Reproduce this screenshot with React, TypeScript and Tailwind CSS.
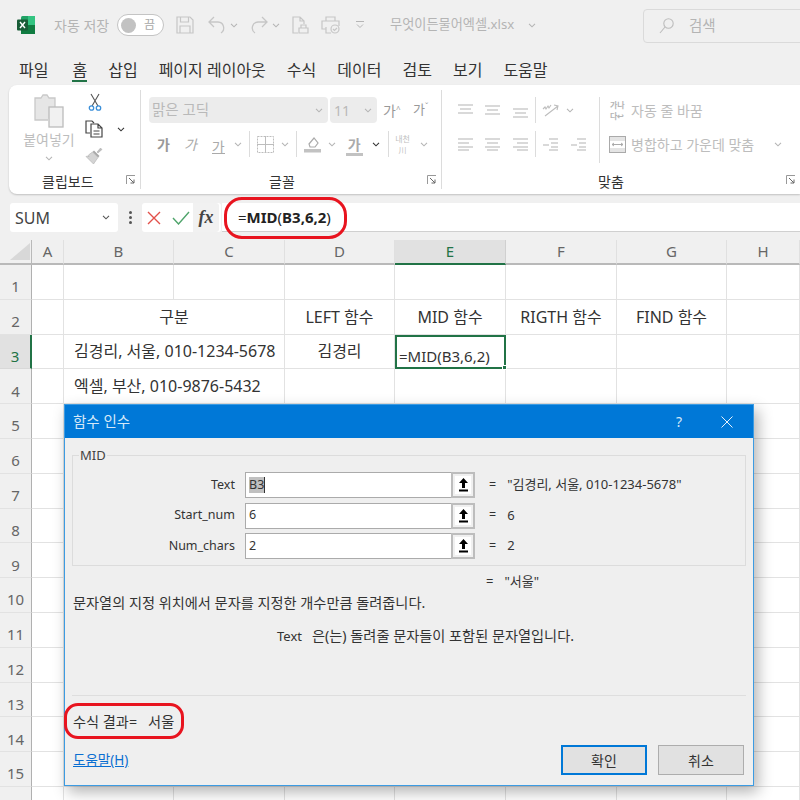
import React from "react";

const Chev = ({ c = "#b5b5b5", w = 8 }: { c?: string; w?: number }) => (
  <svg width={w} height={5} viewBox="0 0 8 5" className="shrink-0"><path d="M1 .8 4 3.8 7 .8" fill="none" stroke={c} strokeWidth="1.1" /></svg>
);

const Launcher = () => (
  <svg width="10" height="10" viewBox="0 0 10 10" className="absolute right-[4px] bottom-[4px]">
    <path d="M.5 9V.5H9" fill="none" stroke="#999" strokeWidth="1" />
    <path d="M3 3 8 8M8 4.5V8H4.5" fill="none" stroke="#666" strokeWidth="1" />
  </svg>
);

const Lines = ({ v }: { v: number[][] }) => (
  <svg width="17" height="16" viewBox="0 0 17 16" className="shrink-0">
    {v.map(([y, x1, x2], i) => (
      <path key={i} d={`M${x1} ${y}H${x2}`} stroke="#c0c0c0" strokeWidth="1.2" />
    ))}
  </svg>
);

const Divider = () => <div className="w-px h-[26px] bg-[#dcdcdc] shrink-0" />;

const Title = () => (
  <div className="h-[50px] flex items-center relative shrink-0">
    <svg width="18" height="18" viewBox="0 0 18 18" className="ml-[17px] shrink-0">
      <rect x="4" y="0" width="14" height="18" rx="1.5" fill="#21a366" />
      <rect x="11" y="0" width="7" height="9" fill="#33c481" />
      <rect x="4" y="9" width="14" height="9" fill="#107c41" />
      <rect x="0" y="3.5" width="11" height="11" rx="1" fill="#185c37" />
      <path d="M3 6 8 12M8 6 3 12" stroke="#fff" strokeWidth="1.4" />
    </svg>
    <span className="ml-[19px] text-[14px] text-[#b4b4b4] w-[63px] shrink-0 whitespace-nowrap">자동 저장</span>
    <div className="w-[47px] h-[22px] rounded-full border border-[#c4c4c4] bg-white flex items-center pl-[3px] shrink-0">
      <span className="w-[15px] h-[15px] rounded-full bg-[#c2c2c2]" />
      <span className="ml-[8px] text-[12px] text-[#a8a8a8]">끔</span>
    </div>
    <svg width="18" height="18" viewBox="0 0 18 18" className="ml-[12px] shrink-0" fill="none" stroke="#c6c6c6" strokeWidth="1.2">
      <path d="M1 1h13l3 3v13H1zM4.5 1v5h8V1M4 17v-7h10v7" />
    </svg>
    <svg width="20" height="18" viewBox="0 0 20 18" className="ml-[13px] shrink-0" fill="none" stroke="#c6c6c6" strokeWidth="1.3">
      <path d="M7 1 2 6l5 5M2 6h9a6 6 0 0 1 3 11" />
    </svg>
    <span className="ml-[3px]"><Chev /></span>
    <svg width="20" height="18" viewBox="0 0 20 18" className="ml-[11px] shrink-0" fill="none" stroke="#c6c6c6" strokeWidth="1.3">
      <path d="M13 1l5 5-5 5M18 6H9a6 6 0 0 0-3 11" />
    </svg>
    <span className="ml-[3px]"><Chev /></span>
    <svg width="17" height="18" viewBox="0 0 17 18" className="ml-[12px] shrink-0" fill="none" stroke="#c6c6c6" strokeWidth="1.2">
      <path d="M6 17H1V1h7l4 4v3M8 1v4h4M7 12h9v5H7zM9 12V9h5v3" />
    </svg>
    <svg width="19" height="18" viewBox="0 0 19 18" className="ml-[12px] shrink-0" fill="none" stroke="#c6c6c6" strokeWidth="1.2">
      <path d="M5 5V1h9v4M5 13H1V5h17v5M5 11v6h5" /><circle cx="14" cy="13" r="4" /><path d="m12 13 1.5 1.5L16 12" />
    </svg>
    <svg width="8" height="8" viewBox="0 0 8 8" className="ml-[16px] shrink-0" fill="none" stroke="#b5b5b5"><path d="M0 .5h8M1 3.5l3 3 3-3" /></svg>
    <span className="ml-[26px] text-[13.2px] text-[#b4b4b4] w-[130px] shrink-0 whitespace-nowrap">무엇이든물어엑셀.xlsx</span>
    <span className="ml-[7px]"><Chev w={10} /></span>
    <div className="absolute left-[643px] top-[9px] w-[170px] h-[34px] rounded-[4px] border border-[#dadada] flex items-center pl-[15px]">
      <svg width="15" height="16" viewBox="0 0 15 16" fill="none" stroke="#bdbdbd" strokeWidth="1.1"><circle cx="9.5" cy="5.5" r="4.7" /><path d="M6 9 1 15" /></svg>
      <span className="ml-[15px] text-[14.5px] text-[#b4b4b4]">검색</span>
    </div>
  </div>
);

const Tabs = () => (
  <div className="h-[35px] flex gap-[21px] pl-[19px] pt-[8px] text-[16px] text-[#333] leading-[24px] shrink-0">
    {["파일", "홈", "삽입", "페이지 레이아웃", "수식", "데이터", "검토", "보기", "도움말"].map((t) => (
      <span key={t} className={`relative whitespace-nowrap ${t === "홈" ? "ml-[3px]" : ""}`}>
        {t}
        {t === "홈" && <span className="absolute left-0 right-0 top-[22px] h-[2px] bg-[#217346]" />}
      </span>
    ))}
  </div>
);

const Clipboard = () => (
  <div className="w-[132px] relative border-r border-[#dcdcdc] my-[5px] shrink-0 flex">
    <div className="w-[74px] flex flex-col items-center pl-[6px] pt-[4px] shrink-0">
      <svg width="30" height="34" viewBox="0 0 30 34" fill="none" stroke="#c9c9c9" strokeWidth="1.3">
        <path d="M14 26H1V4h6l2-3h4l2 3h6v9" fill="#e6e6e6" />
        <rect x="15" y="13" width="14" height="20" fill="#f1f1f1" stroke="#bcbcbc" />
      </svg>
      <span className="mt-[3px] text-[14px] text-[#bdbdbd] whitespace-nowrap leading-[18px]">붙여넣기</span>
      <span className="mt-[7px]"><Chev /></span>
    </div>
    <div className="flex flex-col pt-[3px]">
      <svg width="14" height="18" viewBox="0 0 14 18" className="ml-[5px]" fill="none">
        <path d="M3 1l7 12M11 1 4 13" stroke="#555" strokeWidth="1.1" />
        <circle cx="3.5" cy="15" r="2.2" stroke="#3b8fd9" strokeWidth="1.3" /><circle cx="10.5" cy="15" r="2.2" stroke="#3b8fd9" strokeWidth="1.3" />
      </svg>
      <div className="flex items-center mt-[9px] ml-[2px]">
        <svg width="19" height="18" viewBox="0 0 19 18" fill="none" stroke="#444" strokeWidth="1.2">
          <path d="M5 13H1V1h6l2 2" /><path d="M6 4h7l4 4v9H6zM13 4v4h4M8.5 11h6M8.5 14h6" fill="#fff" />
        </svg>
        <span className="ml-[13px]"><Chev c="#333" /></span>
      </div>
      <svg width="18" height="18" viewBox="0 0 18 18" className="mt-[9px] ml-[2px]">
        <path d="M12 5 15.5 1l1.5 1.500L13 6z" fill="#bdbdbd" stroke="#aaa" strokeWidth=".5" />
        <path d="M9 3.500 14.500 9 13 10.500 7.500 5z" fill="#a8a8a8" />
        <path d="M7.500 5 13 10.500 8.500 17 1 9.500l2-.5 1 1-.5-2z" fill="#d4d4d4" stroke="#b0b0b0" strokeWidth=".6" />
      </svg>
    </div>
    <span className="absolute left-[33px] bottom-[-2px] text-[14px] text-[#333] leading-[18px] whitespace-nowrap">클립보드</span>
    <Launcher />
  </div>
);

const Hg = ({ u, b, i, c = "#aaa" }: { u?: string; b?: boolean; i?: boolean; c?: string }) => (
  <span className="relative text-[14px] leading-[18px] inline-block" style={{ color: c, fontWeight: b ? 700 : 400, fontStyle: i ? "italic" : "normal" }}>
    가
    {u && <span className="absolute left-[-2px] right-[-2px] bottom-[-2px] h-[3px]" style={{ background: u }} />}
  </span>
);

const FontGroup = () => (
  <div className="w-[301px] relative border-r border-[#dcdcdc] my-[5px] shrink-0 pl-[8px] pt-[7px]">
    <div className="flex items-center">
      <div className="w-[179px] h-[26px] rounded-[4px] bg-[#ececec] flex items-center pl-[3px] pr-[5px] justify-between text-[14.5px] text-[#b9b9b9]">
        <span>맑은 고딕</span><Chev />
      </div>
      <div className="ml-[2px] w-[47px] h-[26px] rounded-[4px] bg-[#ececec] flex items-center pl-[4px] pr-[5px] justify-between text-[14px] text-[#b9b9b9]">
        <span>11</span><Chev />
      </div>
      <span className="ml-[6px] w-[24px] text-[14px] text-[#999] whitespace-nowrap">가<sup className="text-[8px]">^</sup></span>
      <span className="ml-[6px] text-[13px] text-[#999] whitespace-nowrap">가<sup className="text-[8px]">ˇ</sup></span>
    </div>
    <div className="flex items-center mt-[8px] h-[26px]">
      <span className="ml-[8px]"><Hg b c="#999" /></span>
      <span className="ml-[14px]"><Hg i /></span>
      <span className="ml-[15px] border-b border-[#aaa] h-[20px]"><Hg /></span>
      <span className="ml-[9px]"><Chev /></span>
      <span className="ml-[7px]"><Divider /></span>
      <svg width="17" height="17" viewBox="0 0 17 17" className="ml-[7px]" fill="none" stroke="#bdbdbd"><path d="M.5.5h16v16H.5z" strokeDasharray="2 1" /><path d="M8.500 0v17M0 8.500h17" /></svg>
      <span className="ml-[7px]"><Chev /></span>
      <span className="ml-[7px]"><Divider /></span>
      <svg width="18" height="18" viewBox="0 0 18 18" className="ml-[7px]"><path d="M5 9l5-6 4 5-3 4H6z" fill="none" stroke="#aaa" strokeWidth="1.2" /><rect x="0" y="14" width="17" height="3.500" fill="#c2c2c2" /></svg>
      <span className="ml-[6px]"><Chev /></span>
      <span className="ml-[12px]"><Hg u="#c2c2c2" b /></span>
      <span className="ml-[11px]"><Chev c="#333" /></span>
      <span className="ml-[8px]"><Divider /></span>
      <span className="ml-[6px] w-[16px] text-[8px] leading-[11px] text-[#c0c0c0] text-center">내천<br />川</span>
      <span className="ml-[9px]"><Chev /></span>
    </div>
    <span className="absolute left-[128px] bottom-[-2px] text-[14px] text-[#333] leading-[18px]">글꼴</span>
    <Launcher />
  </div>
);

const AlignGroup = () => (
  <div className="flex-1 relative my-[5px] pl-[15px] pt-[7px]">
    <div className="flex items-center h-[26px]">
      <Lines v={[[3, 1, 16], [7, 3, 14], [11, 1, 16]]} />
      <span className="ml-[10px]"><Lines v={[[4, 1, 16], [8, 3, 14], [12, 1, 16]]} /></span>
      <span className="ml-[11px]"><Lines v={[[7, 1, 16], [11, 3, 14], [15, 1, 16]]} /></span>
      <span className="ml-[6px]"><Divider /></span>
      <svg width="18" height="16" viewBox="0 0 18 16" className="ml-[6px]" fill="none" stroke="#bdbdbd" strokeWidth="1.1"><path d="M3 14 16 4M12 3l4 1-1 4M1 7l2-2 1 2 2-3 1 2 2-3" /></svg>
      <span className="ml-[6px]"><Chev /></span>
      <span className="ml-[25px] w-px h-[66px] bg-[#dcdcdc] self-start" />
      <span className="ml-[10px] w-[19px] text-[8px] leading-[11px] text-[#b5b5b5] font-bold whitespace-nowrap">가나<br />다↩</span>
      <span className="ml-[2px] text-[14px] text-[#bdbdbd] whitespace-nowrap">자동 줄 바꿈</span>
    </div>
    <div className="flex items-center h-[26px] mt-[8px]">
      <Lines v={[[3, 1, 16], [7, 1, 12], [11, 1, 16], [14, 1, 12]]} />
      <span className="ml-[10px]"><Lines v={[[3, 1, 16], [7, 3, 14], [11, 1, 16], [14, 3, 14]]} /></span>
      <span className="ml-[11px]"><Lines v={[[3, 1, 16], [7, 5, 16], [11, 1, 16], [14, 5, 16]]} /></span>
      <span className="ml-[6px]"><Divider /></span>
      <span className="ml-[6px]"><Lines v={[[3, 7, 16], [7, 9, 16], [11, 9, 16], [14, 7, 16], [9, 1, 7]]} /></span>
      <span className="ml-[11px]"><Lines v={[[3, 7, 16], [7, 9, 16], [11, 9, 16], [14, 7, 16], [9, 1, 7]]} /></span>
      <svg width="17" height="17" viewBox="0 0 17 17" className="ml-[22px]" fill="none" stroke="#aaa"><rect x=".5" y=".5" width="16" height="16" fill="#e4e4e4" /><rect x="1" y="5" width="15" height="7" fill="#fff" stroke="none" /><path d="M3 8.500h11M5 7 3 8.500 5 10M12 7l2 1.500L12 10" /></svg>
      <span className="ml-[5px] text-[14px] text-[#bdbdbd] whitespace-nowrap w-[143px]">병합하고 가운데 맞춤</span>
      <Chev />
    </div>
    <span className="absolute left-[156px] bottom-[-2px] text-[14px] text-[#333] leading-[18px]">맞춤</span>
    <Launcher />
  </div>
);

const Ribbon = () => (
  <div className="ml-[9px] h-[109px] bg-white rounded-l-[8px] shadow-[0_1px_2px_rgba(0,0,0,0.2)] flex shrink-0">
    <Clipboard />
    <FontGroup />
    <AlignGroup />
  </div>
);

const FormulaBar = () => (
  <div className="h-[29px] mt-[9px] flex items-stretch pl-[10px] shrink-0">
    <div className="w-[108px] bg-white rounded-[3px] flex items-center justify-between pl-[5px] pr-[7px] text-[16px] text-[#444]">
      <span>SUM</span><Chev c="#555" w={10} />
    </div>
    <div className="w-[24px] flex flex-col items-center justify-center gap-[2px]">
      {[0, 1, 2].map((i) => <span key={i} className="w-[3px] h-[3px] rounded-full bg-[#555]" />)}
    </div>
    <div className="w-[79px] bg-white rounded-[3px] flex items-center">
      <svg width="14" height="14" viewBox="0 0 14 14" className="ml-[5px]"><path d="M1 1l12 12M13 1 1 13" stroke="#e2504a" strokeWidth="1.4" /></svg>
      <svg width="18" height="14" viewBox="0 0 18 14" className="ml-[11px]"><path d="M1 7l5.500 6L17 1" fill="none" stroke="#4fa46b" strokeWidth="1.4" /></svg>
      <span className="ml-[3px] w-[26px] h-[29px] bg-[#f1f1f1] rounded-r-[3px] flex items-center justify-center text-[18px] italic font-['Liberation_Serif',serif] text-[#444]"><b>fx</b></span>
    </div>
    <div className="flex-1 bg-white border-b border-[#d0d0d0] ml-px pl-[16px] flex items-center text-[15px] text-[#222]">
      <span>=</span><b>MID</b><span>(</span><b>B3,6,2</b><span>)</span>
    </div>
  </div>
);

const cols = ["A", "B", "C", "D", "E", "F", "G", "H"];
const rows = Array.from({ length: 16 }, (_, i) => i + 1);
const cell = "bg-white border-r border-b border-[#e2e2e2] text-[16px] text-[#333] whitespace-nowrap flex";

const Sheet = () => (
  <div className="mt-[8px] grid grid-cols-[32px_32px_110px_111px_110px_111px_111px_110px_73px] auto-rows-[34.8px] grid-rows-[25px] relative">
    <div className="bg-[#f0f0f0] border-r border-b-2 border-[#b9b9b9] flex items-end justify-end pr-[1px] pb-[3px]">
      <svg width="20" height="17" viewBox="0 0 20 17"><path d="M20 0v17H0z" fill="#d8d8d8" /></svg>
    </div>
    {cols.map((c) => (
      <div key={c} className={`flex items-center justify-center text-[15px] border-r ${c === "E" ? "bg-[#e1e1e1] text-[#217346] border-b-2 border-b-[#217346] border-r-[#d0d0d0]" : "bg-[#f0f0f0] text-[#666] border-b-2 border-b-[#b9b9b9] border-r-[#e0e0e0]"}`}>{c}</div>
    ))}
    {rows.map((r) => (
      <React.Fragment key={r}>
        <div className={`flex items-end justify-center pb-[1px] text-[15px] border-b ${r === 3 ? "bg-[#e1e1e1] text-[#217346] border-r-2 border-r-[#217346] border-b-[#d8d8d8]" : "bg-[#f0f0f0] text-[#666] border-r border-r-[#b0b0b0] border-b-[#e2e2e2]"}`}>{r <= 15 ? r : ""}</div>
        <div className={cell} />
        {r >= 2 && r <= 4 ? (
          <div className={`${cell} col-span-2 items-center ${r === 2 ? "justify-center" : "pl-[10px]"}`}>
            {r === 2 ? "구분" : r === 3 ? "김경리, 서울, 010-1234-5678" : "엑셀, 부산, 010-9876-5432"}
          </div>
        ) : (
          <>
            <div className={cell} />
            <div className={cell} />
          </>
        )}
        <div className={`${cell} items-center justify-center`}>{r === 2 ? "LEFT 함수" : r === 3 ? "김경리" : ""}</div>
        {r === 3 ? (
          <div className="relative bg-white border-2 border-[#217346] text-[15px] text-[#333] whitespace-nowrap pl-[2px] flex items-end leading-[22px]">
            =MID(B3,6,2)
            <span className="absolute right-[-3px] bottom-[-3px] w-[5px] h-[5px] bg-[#217346] border border-white" />
          </div>
        ) : (
          <div className={`${cell} items-center justify-center`}>{r === 2 ? "MID 함수" : ""}</div>
        )}
        <div className={`${cell} items-center justify-center`}>{r === 2 ? "RIGTH 함수" : ""}</div>
        <div className={`${cell} items-center justify-center`}>{r === 2 ? "FIND 함수" : ""}</div>
        <div className={cell} />
      </React.Fragment>
    ))}
  </div>
);

const RefBtn = () => (
  <div className="w-[24px] h-full bg-[#f0f0f0] border-2 border-[#bdbdbd] shrink-0 flex items-center justify-center p-[2px]">
    <div className="w-full h-full bg-white flex items-center justify-center">
      <svg width="9" height="14" viewBox="0 0 9 14"><path d="M4.500 0 9 5H6v5H3V5H0z" fill="#000" /><rect x="0" y="11.500" width="9" height="2" fill="#000" /></svg>
    </div>
  </div>
);

const Arg = ({ name, val, res, sel }: { name: string; val: string; res: string; sel?: boolean }) => (
  <div className="h-[26px] flex items-center">
    <span className="w-[162px] text-right shrink-0">{name}</span>
    <div className="ml-[10px] flex h-[26px] w-[230px] shrink-0">
      <div className="flex-1 bg-white border border-[#ababab] border-r-0 flex items-center pl-[3px] text-[#333]">
        {sel ? <span className="bg-[#c0c0c0] leading-[16px] border-r border-[#333]">{val}</span> : val}
      </div>
      <RefBtn />
    </div>
    <span className="ml-[14px]">=</span>
    <span className="ml-[11px] whitespace-nowrap text-[13px]">{res}</span>
  </div>
);

const Dialog = () => (
  <div className="absolute left-[64px] top-[404px] w-[690px] h-[382px] bg-[#efefef] border border-[#3c9be2] shadow-[4px_6px_14px_rgba(0,0,0,0.3)] text-[12.5px] text-[#333] flex flex-col">
    <div className="h-[33px] bg-[#0078d7] flex items-center pl-[8px] text-[#d5e8f8] text-[14.5px] shrink-0">
      <span>함수 인수</span>
      <span className="ml-auto text-[14px]">?</span>
      <svg width="12" height="12" viewBox="0 0 12 12" className="ml-[39px] mr-[20px]"><path d="M.5.5l11 11M11.500.5l-11 11" stroke="#e6f1fb" strokeWidth="1" /></svg>
    </div>
    <div className="relative mx-[7px] mt-[17px] h-[111px] border border-[#dcdcdc] pt-[16px] flex flex-col gap-[4.5px] shrink-0">
      <span className="absolute left-[6px] top-[-9px] bg-[#efefef] px-px leading-[16px] text-[13px] text-[#444]">MID</span>
      <Arg name="Text" val="B3" res={'"김경리, 서울, 010-1234-5678"'} sel />
      <Arg name="Start_num" val="6" res="6" />
      <Arg name="Num_chars" val="2" res="2" />
    </div>
    <div className="h-[18px] mt-[7px] flex items-center pl-[421px] shrink-0 text-[13px]">
      <span>=</span><span className="ml-[11px]">"서울"</span>
    </div>
    <div className="pl-[8px] h-[18px] mt-[3px] leading-[18px] whitespace-nowrap shrink-0 text-[14.2px]">문자열의 지정 위치에서 문자를 지정한 개수만큼 돌려줍니다.</div>
    <div className="h-[18px] mt-[15px] leading-[18px] pl-[212px] flex whitespace-nowrap shrink-0 text-[14.2px]">
      <span className="w-[35px] text-[13px]">Text</span><span>은(는) 돌려줄 문자들이 포함된 문자열입니다.</span>
    </div>
    <div className="mx-[7px] mt-[50px] border-t border-[#dedede] shrink-0" />
    <div className="pl-[8px] mt-[17px] leading-[18px] shrink-0 whitespace-pre text-[14.2px]">수식 결과=   서울</div>
    <div className="mt-[14px] flex items-start pl-[8px] shrink-0">
      <span className="mt-[6px] text-[#0a6ed1] underline leading-[18px] text-[13.5px]">도움말(H)</span>
      <div className="ml-auto mr-[9px] flex gap-[11px]">
        <div className="w-[86px] h-[30px] bg-[#e1e1e1] border-2 border-[#0078d7] flex items-center justify-center text-[14px]">확인</div>
        <div className="w-[86px] h-[30px] bg-[#e1e1e1] border border-[#adadad] flex items-center justify-center text-[14px]">취소</div>
      </div>
    </div>
  </div>
);

export default function App() {
  return (
    <div className="w-[800px] h-[800px] relative overflow-hidden bg-[#f0f0f0] flex flex-col font-['Noto_Sans','Noto_Sans_CJK_KR',sans-serif]">
      <Title />
      <Tabs />
      <Ribbon />
      <FormulaBar />
      <Sheet />
      <Dialog />
      <div className="absolute left-[224px] top-[197px] w-[123px] h-[42px] rounded-[18px] border-[3px] border-[#e8141f]" />
      <div className="absolute left-[64px] top-[703px] w-[120px] h-[36px] rounded-[14px] border-[3px] border-[#e8141f]" />
    </div>
  );
}
